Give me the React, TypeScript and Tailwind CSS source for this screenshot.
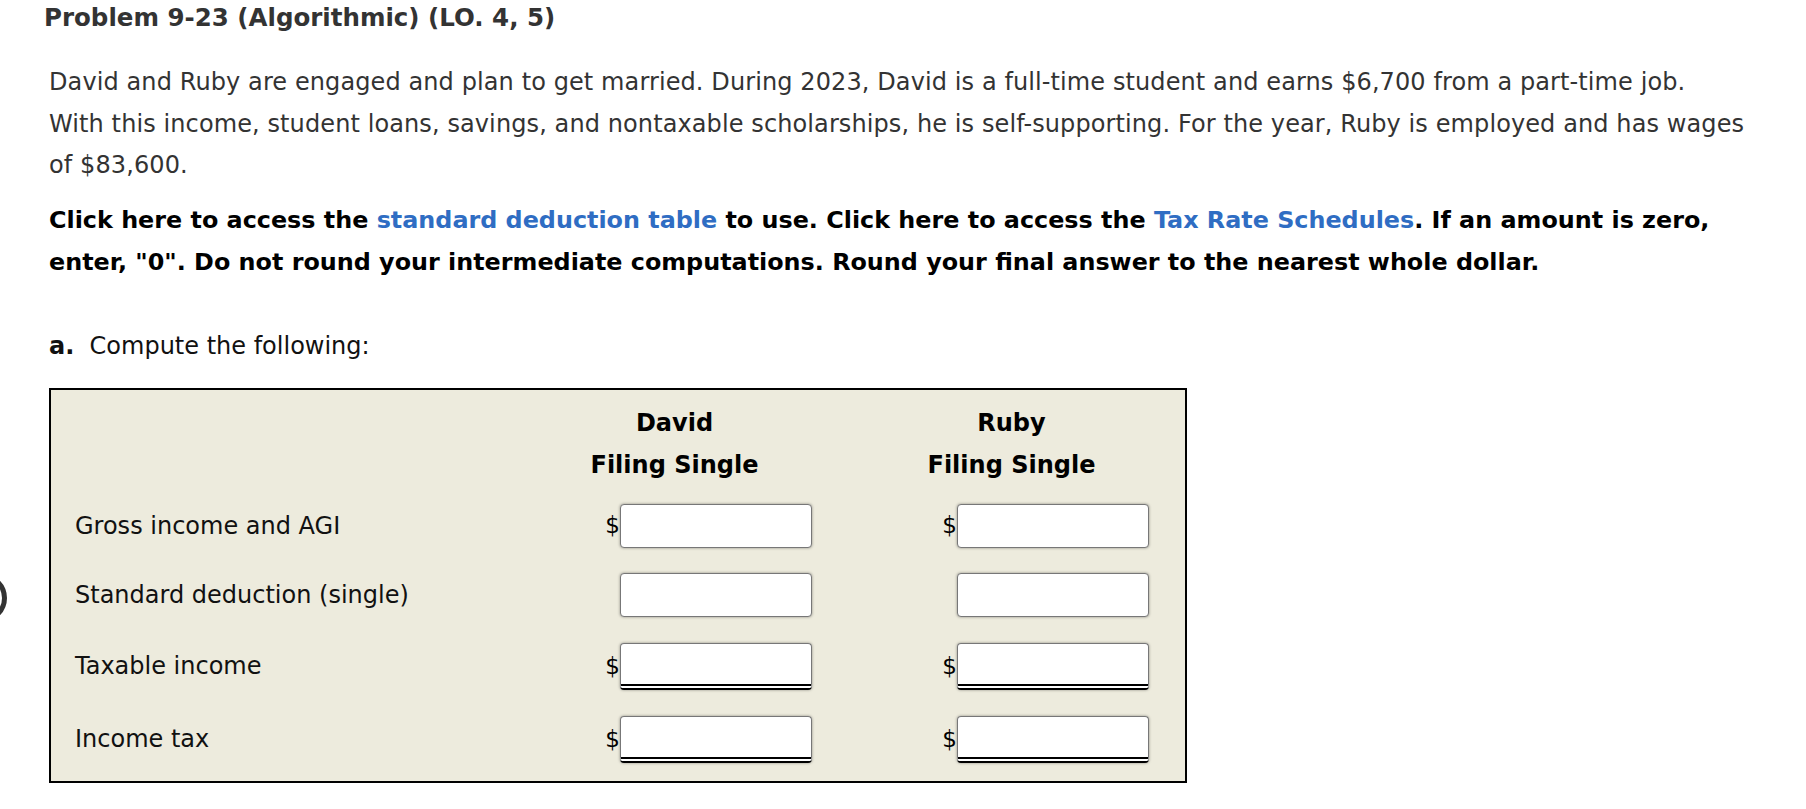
import React from 'react'

const font = { fontFamily: '"DejaVu Sans", Verdana, sans-serif' }

interface RowProps {
  label: string
  dollar: boolean
  total?: boolean
  height: string
}

const AmountInput = ({ dollar, total }: { dollar: boolean; total?: boolean }) => (
  <div className="flex items-center pl-[98px]">
    <span className={`w-[16px] text-right text-[23px] leading-none text-black ${dollar ? '' : 'invisible'}`}>$</span>
    <input
      type="text"
      className={`w-[192px] rounded-[4px] border border-[#777] bg-white shadow-[0_0_3px_rgba(0,0,0,0.4)] outline-none ${
        total ? 'h-[47px] border-b-[6px] border-b-black [border-bottom-style:double]' : 'h-[44px]'
      }`}
    />
  </div>
)

const Row = ({ label, dollar, total, height }: RowProps) => (
  <div className={`grid grid-cols-[455px_337px_337px] items-center ${height}`}>
    <div className="pl-6 text-[24px] text-[#111]">{label}</div>
    <AmountInput dollar={dollar} total={total} />
    <AmountInput dollar={dollar} total={total} />
  </div>
)

export default function App() {
  return (
    <div className="relative min-h-[809px] w-full overflow-hidden bg-white" style={font}>
      {/* stray circle cut off at the left edge */}
      <div className="absolute left-[-43px] top-[573px] h-[50px] w-[50px] rounded-full border-[5px] border-[#333]" />

      <div className="pt-[3px] pl-[44px]">
        <h1 className="text-[24.5px] font-bold leading-[30px] text-[#333]">Problem 9-23 (Algorithmic) (LO. 4, 5)</h1>
      </div>

      <div className="pl-[49px]">
        <p className="mt-[29px] w-[1740px] text-[24px] leading-[41.5px] tracking-[0.1px] text-[#333]">
          David and Ruby are engaged and plan to get married. During 2023, David is a full-time student and earns $6,700 from a part-time job.
          <br />
          With this income, student loans, savings, and nontaxable scholarships, he is self-supporting. For the year, Ruby is employed and has wages
          <br />
          of $83,600.
        </p>

        <p className="mt-[12px] w-[1700px] text-[23.85px] font-bold leading-[42px] text-black">
          Click here to access the <a className="text-[#2f6dc3]">standard deduction table</a> to use. Click here to access the{' '}
          <a className="text-[#2f6dc3]">Tax Rate Schedules</a>. If an amount is zero, enter, "0". Do not round your intermediate computations. Round your final answer to the nearest whole dollar.
        </p>

        <p className="mt-[42px] text-[24px] leading-[42px] text-[#111]">
          <span className="font-bold">a.</span>&nbsp; Compute the following:
        </p>

        <div className="mt-[21px] w-[1138px] border-2 border-black bg-[#edebdd] pb-[5px]">
          <div className="grid grid-cols-[455px_337px_337px] pt-[12px] pb-[5px] text-[24px] font-bold leading-[42px] text-black">
            <div />
            <div className="text-center">
              David
              <br />
              Filing Single
            </div>
            <div className="text-center">
              Ruby
              <br />
              Filing Single
            </div>
          </div>
          <Row label="Gross income and AGI" dollar height="h-[70px]" />
          <Row label="Standard deduction (single)" dollar={false} height="h-[69px]" />
          <Row label="Taxable income" dollar total height="h-[73px]" />
          <Row label="Income tax" dollar total height="h-[73px]" />
        </div>
      </div>
    </div>
  )
}
